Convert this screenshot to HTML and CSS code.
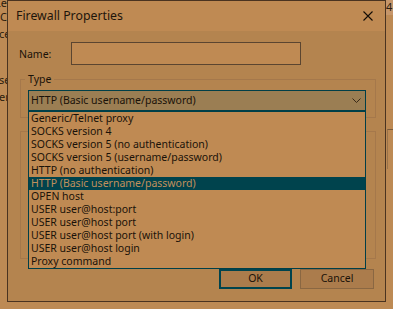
FILE: index.html
```html
<!DOCTYPE html>
<html>
<head>
<meta charset="utf-8">
<link rel="stylesheet" href="styles.css">
</head>
<body>
<div class="desktop">
  <div class="bg-left">
    <div class="frag f1">Le</div>
    <div class="frag f2">Co</div>
    <div class="frag f3">ce</div>
    <div class="frag f4">se</div>
    <div class="frag f5">er</div>
  </div>
  <div class="bg-right">
    <div class="rtop">4</div>
    <div class="rbox"></div>
  </div>

  <div class="window">
    <div class="titlebar">
      <span class="title">Firewall Properties</span>
      <svg class="close" width="10" height="10" viewBox="0 0 10 10">
        <path d="M0.5 0.5 L9.5 9.5 M9.5 0.5 L0.5 9.5" stroke="#120c06" stroke-width="1.1" fill="none"/>
      </svg>
    </div>
    <div class="body">
      <div class="name-row">
        <span class="label">Name:</span>
        <div class="input"></div>
      </div>
      <div class="group type-group">
        <span class="legend">Type</span>
        <div class="combo-wrap">
          <div class="combo">
            <span>HTTP (Basic username/password)</span>
            <svg class="chev" width="9" height="5" viewBox="0 0 9 5">
              <path d="M0.5 0.5 L4.5 4.5 L8.5 0.5" stroke="#3a2a18" stroke-width="1" fill="none"/>
            </svg>
          </div>
          <ul class="list">
            <li>Generic/Telnet proxy</li>
            <li>SOCKS version 4</li>
            <li>SOCKS version 5 (no authentication)</li>
            <li>SOCKS version 5 (username/password)</li>
            <li>HTTP (no authentication)</li>
            <li class="sel">HTTP (Basic username/password)</li>
            <li>OPEN host</li>
            <li>USER user@host:port</li>
            <li>USER user@host port</li>
            <li>USER user@host port (with login)</li>
            <li>USER user@host login</li>
            <li>Proxy command</li>
          </ul>
        </div>
      </div>
      <div class="group second-group"></div>
      <div class="buttons">
        <div class="btn ok">OK</div>
        <div class="btn cancel">Cancel</div>
      </div>
    </div>
  </div>
</div>
</body>
</html>
```

FILE: styles.css
```css
* { box-sizing: border-box; }
html, body { margin: 0; padding: 0; }
body {
  width: 393px;
  height: 309px;
  overflow: hidden;
  background: #bf8a53;
  font-family: "Noto Sans", "Open Sans", sans-serif;
  font-size: 10.5px;
  color: #1a1209;
}
.desktop {
  position: relative;
  width: 393px;
  height: 309px;
  overflow: hidden;
  background: #bd8a54;
}
.bg-left {
  position: absolute;
  left: 0;
  top: 0;
  width: 7px;
  height: 309px;
  overflow: hidden;
}
.frag {
  position: absolute;
  font-size: 11px;
  line-height: 12px;
  white-space: nowrap;
  color: #2a1c0e;
}
.f1 { top: -3px; left: -5px; }
.f2 { top: 11px; left: 0; }
.f3 { top: 28px; left: -1px; }
.f4 { top: 74px; left: -1px; }
.f5 { top: 91px; left: -1px; }
.bg-right {
  position: absolute;
  left: 386px;
  top: 0;
  width: 7px;
  height: 309px;
  overflow: hidden;
}
.rtop {
  height: 15px;
  background: #c6966a;
  font-size: 11px;
  line-height: 13px;
  color: #2a1c0e;
}
.rbox {
  position: absolute;
  left: 1px;
  top: 129px;
  width: 10px;
  height: 40px;
  border-top: 1px solid #7a5a3a;
  border-left: 1px solid #9a7248;
}
.window {
  position: absolute;
  left: 7px;
  top: 0;
  width: 379px;
  height: 302px;
  border: 1px solid #4a3320;
  background: #b4844f;
  display: flex;
  flex-direction: column;
}
.titlebar {
  height: 30px;
  flex: none;
  background: #bf8a53;
  display: flex;
  align-items: center;
  justify-content: space-between;
  padding: 0 12px 1px 8px;
}
.title {
  font-size: 12.3px;
  color: #1e150b;
}
.close { display: block; }
.body {
  flex: 1;
  position: relative;
  padding: 11px 0 0 11px;
}
.name-row {
  display: flex;
  align-items: center;
  height: 23px;
}
.label {
  width: 52px;
}
.input {
  width: 230px;
  height: 23px;
  background: #bf8a53;
  border: 1px solid #5b4530;
}
.group {
  border: 1px solid #a5784b;
  margin-left: 1px;
  width: 356px;
}
.type-group {
  position: relative;
  margin-top: 14px;
  height: 39px;
  padding: 10px 0 0 7px;
}
.legend {
  position: absolute;
  top: -9px;
  left: 4px;
  padding: 0 3px;
  background: #b4844f;
  line-height: 16px;
}
.combo-wrap {
  position: relative;
  width: 338px;
}
.combo {
  height: 20px;
  background: #9b7e53;
  border: 1px solid #003f48;
  border-bottom: none;
  display: flex;
  align-items: center;
  justify-content: space-between;
  padding: 0 4px 1px 2px;
  line-height: 13px;
}
.chev { display: block; }
.list {
  position: absolute;
  z-index: 5;
  left: 0;
  top: 20px;
  width: 338px;
  margin: 0;
  padding: 0;
  list-style: none;
  background: #bf8a53;
  border: 1px solid #003f48;
  border-top: 2px solid #003f48;
}
.list li {
  height: 13px;
  line-height: 13px;
  padding-left: 2px;
  white-space: nowrap;
}
.list li.sel {
  background: #00434d;
  color: #c0905c;
}
.second-group {
  margin-top: 13px;
  height: 128px;
}
.buttons {
  display: flex;
  gap: 8px;
  margin-top: 10px;
  padding-left: 200px;
}
.btn {
  height: 20px;
  display: flex;
  align-items: center;
  justify-content: center;
  background: #ab7c4c;
  line-height: 13px;
  padding-bottom: 1px;
}
.ok {
  width: 73px;
  border: 2px solid #00434d;
}
.cancel {
  width: 74px;
  border: 1px solid #8a6742;
}
```
